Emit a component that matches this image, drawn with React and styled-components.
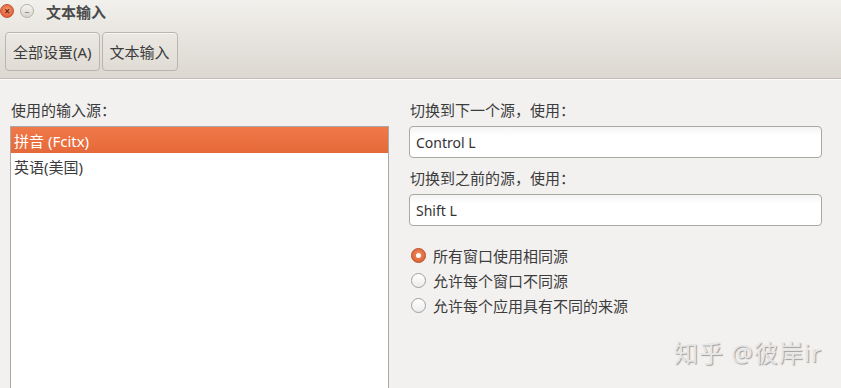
import React from "react"
import styled, { createGlobalStyle, css } from "styled-components"

const GlobalStyle = createGlobalStyle`
  html, body {
    margin: 0;
    padding: 0;
    background: #f2f1f0;
  }
  body {
    font-family: "Noto Sans", "Noto Sans CJK SC", sans-serif;
    font-size: 15px;
    color: #3c3c3c;
  }
`

const Window = styled.div`
  position: relative;
  width: 841px;
  height: 388px;
  overflow: hidden;
  display: flex;
  flex-direction: column;
  background: #f2f1f0;
`

const Header = styled.div`
  background: linear-gradient(#f1f0ec, #e9e6e1 40%, #dcd8d1);
  border-bottom: 1px solid #c2beb7;
  box-shadow: 0 1px 0 #fbfbfa;
`

const TitleBar = styled.div`
  height: 22px;
  display: flex;
  align-items: center;
`

const WinButton = styled.span`
  width: 14px;
  height: 14px;
  border-radius: 50%;
  box-sizing: border-box;
  display: flex;
  align-items: center;
  justify-content: center;
  font-size: 10px;
  line-height: 1;
  margin-left: ${props => props.$first ? "0px" : "6px"};
  ${props => props.$kind === "close"
    ? css`
      background: radial-gradient(circle at 50% 40%, #f89a70, #e5623a 70%, #c9502c);
      border: 1px solid #c0532f;
      color: #5a2a18;
      font-weight: bold;
    `
    : css`
      background: linear-gradient(#f6f5f3, #d8d5cf);
      border: 1px solid #b3afa8;
      color: #8b8780;
    `}
`

const TitleText = styled.span`
  margin-left: 12px;
  font-weight: bold;
  font-size: 15px;
  color: #4a4a4a;
`

const Toolbar = styled.div`
  height: 56px;
  display: flex;
  align-items: flex-start;
  padding: 10px 0 0 5px;
  box-sizing: border-box;
  gap: 2px;
`

const ToolButton = styled.button`
  height: 39px;
  padding: 0 7px;
  border: 1px solid #bab5ad;
  border-radius: 4px;
  background: linear-gradient(#ebe8e3, #e0dcd5);
  box-shadow: inset 0 1px 0 rgba(255, 255, 255, 0.6);
  font-family: inherit;
  font-size: 15px;
  color: #3c3c3c;
`

const Content = styled.div`
  flex: 1;
  display: grid;
  grid-template-columns: 379px 413px;
  column-gap: 20px;
  padding: 22px 0 0 10px;
  min-height: 0;
`

const Column = styled.div`
  display: flex;
  flex-direction: column;
  min-height: 0;
`

const Label = styled.div`
  line-height: 18px;
  margin: ${props => props.$top || 0}px 0 7px 1px;
`

const ListBox = styled.div`
  flex: 1;
  background: #fff;
  border: 1px solid #a9a9a9;
  border-bottom: none;
`

const ListRow = styled.div`
  height: 26px;
  display: flex;
  align-items: center;
  padding-left: 3px;
  ${props => props.$selected && css`
    background: linear-gradient(#f07949, #e5693a);
    color: #fff;
  `}
`

const KeyInput = styled.div`
  height: 32px;
  box-sizing: border-box;
  border: 1px solid #aaa8a5;
  border-radius: 4px;
  background: linear-gradient(#f4f4f4, #ffffff 30%);
  display: flex;
  align-items: center;
  padding-left: 6px;
  font-size: 14px;
  color: #333;
`

const RadioGroup = styled.div`
  margin-top: 17px;
  display: flex;
  flex-direction: column;
`

const RadioRow = styled.label`
  height: 25px;
  display: flex;
  align-items: center;
  padding-left: 2px;
`

const RadioDot = styled.span`
  width: 15px;
  height: 15px;
  border-radius: 50%;
  box-sizing: border-box;
  margin-right: 7px;
  display: flex;
  align-items: center;
  justify-content: center;
  ${props => props.$checked
    ? css`
      background: radial-gradient(circle at 50% 40%, #f08a5c, #d75a2e);
      border: 1px solid #b94a22;
      &::after {
        content: "";
        width: 5px;
        height: 5px;
        border-radius: 50%;
        background: #fff;
      }
    `
    : css`
      background: linear-gradient(#ffffff, #ececec);
      border: 1px solid #9f9f9f;
    `}
`

const Watermark = styled.div`
  position: absolute;
  right: 19px;
  top: 339px;
  font-size: 24px;
  line-height: 28px;
  color: #e6e6e6;
  text-shadow: 1px 1px 1px rgba(0, 0, 0, 0.35);
  letter-spacing: 1px;
`

const sources = [
  { id: "pinyin", name: "拼音 (Fcitx)" },
  { id: "en-us", name: "英语(美国)" },
]

const modes = [
  "所有窗口使用相同源",
  "允许每个窗口不同源",
  "允许每个应用具有不同的来源",
]

const App = () => {
  return (
    <Window>
      <GlobalStyle />
      <Header>
        <TitleBar>
          <WinButton $kind="close" $first>×</WinButton>
          <WinButton $kind="min">–</WinButton>
          <TitleText>文本输入</TitleText>
        </TitleBar>
        <Toolbar>
          <ToolButton>全部设置(A)</ToolButton>
          <ToolButton>文本输入</ToolButton>
        </Toolbar>
      </Header>
      <Content>
        <Column>
          <Label>使用的输入源：</Label>
          <ListBox>
            {sources.map((s, i) => (
              <ListRow key={s.id} $selected={i === 0}>{s.name}</ListRow>
            ))}
          </ListBox>
        </Column>
        <Column>
          <Label>切换到下一个源，使用：</Label>
          <KeyInput>Control L</KeyInput>
          <Label $top={11}>切换到之前的源，使用：</Label>
          <KeyInput>Shift L</KeyInput>
          <RadioGroup>
            {modes.map((m, i) => (
              <RadioRow key={m}>
                <RadioDot $checked={i === 0} />
                {m}
              </RadioRow>
            ))}
          </RadioGroup>
        </Column>
      </Content>
      <Watermark>知乎 @彼岸ir</Watermark>
    </Window>
  )
}

export default App
